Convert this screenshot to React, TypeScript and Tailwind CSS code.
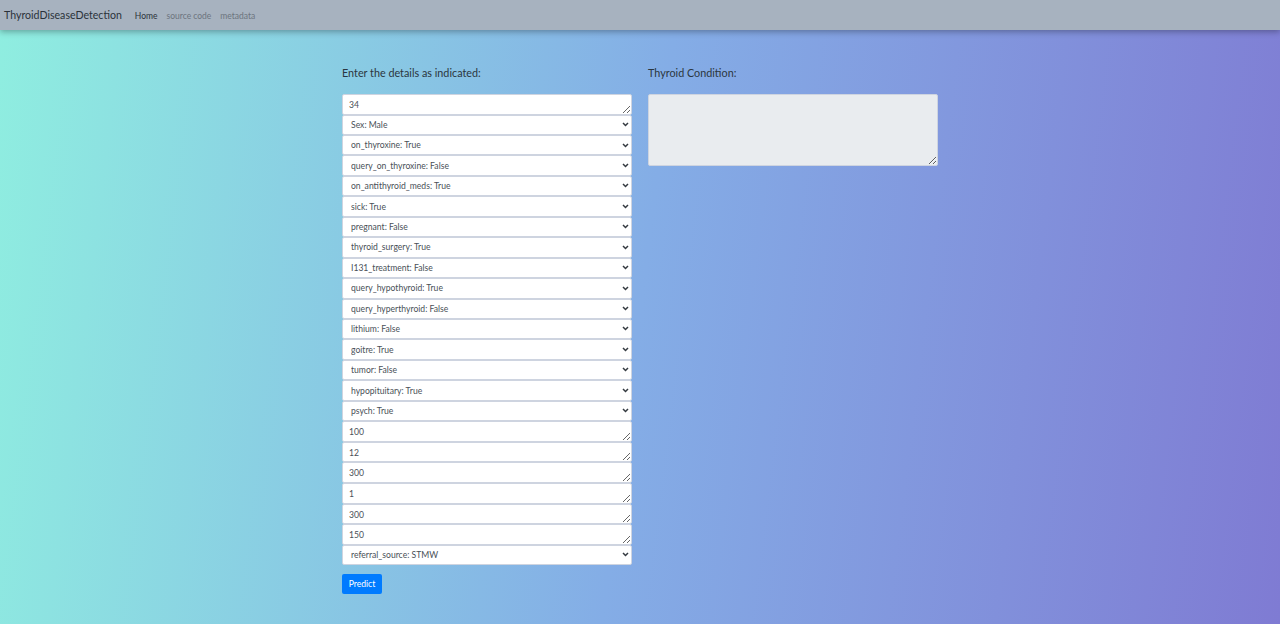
import React from "react"

const font = { fontFamily: 'Lato, "Open Sans", sans-serif' }

type Field =
  | { kind: "text"; value: string }
  | { kind: "select"; value: string }

const fields: Field[] = [
  { kind: "text", value: "34" },
  { kind: "select", value: "Sex: Male" },
  { kind: "select", value: "on_thyroxine: True" },
  { kind: "select", value: "query_on_thyroxine: False" },
  { kind: "select", value: "on_antithyroid_meds: True" },
  { kind: "select", value: "sick: True" },
  { kind: "select", value: "pregnant: False" },
  { kind: "select", value: "thyroid_surgery: True" },
  { kind: "select", value: "I131_treatment: False" },
  { kind: "select", value: "query_hypothyroid: True" },
  { kind: "select", value: "query_hyperthyroid: False" },
  { kind: "select", value: "lithium: False" },
  { kind: "select", value: "goitre: True" },
  { kind: "select", value: "tumor: False" },
  { kind: "select", value: "hypopituitary: True" },
  { kind: "select", value: "psych: True" },
  { kind: "text", value: "100" },
  { kind: "text", value: "12" },
  { kind: "text", value: "300" },
  { kind: "text", value: "1" },
  { kind: "text", value: "300" },
  { kind: "text", value: "150" },
  { kind: "select", value: "referral_source: STMW" },
]

function Navbar() {
  return (
    <nav className="flex items-center h-[30px] pl-[4px] pt-[2px] bg-[#a7b2bf] shadow-[0_2px_6px_rgba(0,0,0,0.3)]">
      <a className="text-[10.6px] text-[#2b323a] mr-[13px]">ThyroidDiseaseDetection</a>
      <a className="text-[8.5px] text-[#2b323a] mr-[9px]">Home</a>
      <a className="text-[8.5px] text-[#6c747e] mr-[9px]">source code</a>
      <a className="text-[8.5px] text-[#6c747e]">metadata</a>
    </nav>
  )
}

export default function App() {
  return (
    <div
      style={font}
      className="w-[1280px] h-[624px] overflow-hidden bg-[linear-gradient(97deg,#8feee0_0%,#84ade6_50%,#7f7bd3_100%)]"
    >
      <Navbar />
      <main className="flex justify-center gap-[16px] pt-[35px]">
        <section className="w-[290px]">
          <h2 className="text-[10.8px] leading-[16px] text-[#2b3640] mb-[13px]">Enter the details as indicated:</h2>
          <form className="flex flex-col">
            {fields.map((f, i) =>
              f.kind === "text" ? (
                <textarea
                  key={i}
                  defaultValue={f.value}
                  className="block w-full h-[20.6px] min-h-0 px-[6px] pt-[3px] pb-[1px] text-[8.6px] leading-[14px] text-[#495057] bg-white border border-[#ced4e0] rounded-[2px] outline-none"
                />
              ) : (
                <div key={i} className="relative">
                  <select
                    defaultValue={f.value}
                    className="block w-full h-[20.45px] pl-[8px] pt-[1px] appearance-none text-[8.6px] text-[#495057] bg-white border border-[#ced4e0] rounded-[2px] outline-none"
                  >
                    <option>{f.value}</option>
                  </select>
                  <svg viewBox="0 0 8 6" className="absolute right-[3px] top-[7.5px] w-[7px] h-[5px] pointer-events-none">
                    <path d="M1 1.2l3 3 3-3" fill="none" stroke="#343a40" strokeWidth="1.8" />
                  </svg>
                </div>
              )
            )}
          </form>
          <button className="mt-[9px] h-[20px] w-[40px] text-[8.6px] text-white bg-[#007bff] rounded-[2px]">Predict</button>
        </section>
        <section className="w-[290px]">
          <h2 className="text-[10.8px] leading-[16px] text-[#2b3640] mb-[13px]">Thyroid Condition:</h2>
          <textarea
            disabled
            className="block w-full h-[72px] bg-[#e9ecef] border border-[#ced4e0] rounded-[2px]"
          />
        </section>
      </main>
    </div>
  )
}
